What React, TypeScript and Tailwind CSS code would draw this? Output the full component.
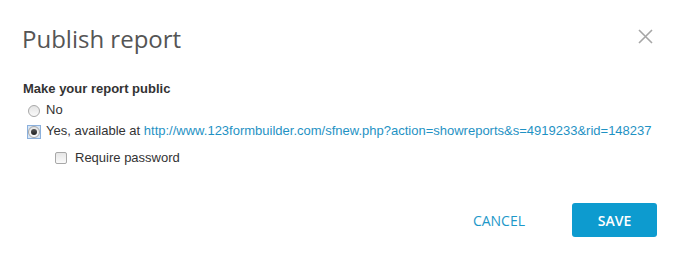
import React from 'react';

const Radio = ({ checked }: { checked?: boolean }) => (
  <span className={`flex h-[14px] w-[14px] items-center justify-center ${checked ? 'border border-[#8bb0dc] bg-[#d7e6f6]' : ''}`}>
    <span className="flex h-[12px] w-[12px] items-center justify-center rounded-full border border-[#a8a8a8] bg-gradient-to-b from-[#e4e4e4] to-[#fafafa]">
      {checked && <span className="h-[6px] w-[6px] rounded-full bg-gradient-to-b from-[#555] to-[#222]" />}
    </span>
  </span>
);

const Checkbox = () => (
  <span className="block h-[12px] w-[12px] rounded-[2px] border border-[#a8a8a8] bg-gradient-to-b from-[#e6e6e6] to-[#fafafa]" />
);

const App = () => {
  return (
    <div className="flex h-[260px] w-[675px] flex-col bg-white">
      <div className="flex items-start justify-between pl-[22px] pr-[22px] pt-[23px]">
        <h1 className="h-[32px] text-[24px] leading-[32px] font-normal text-[#555] font-['Open_Sans',sans-serif]">
          Publish report
        </h1>
        <button className="mt-[6px] mr-[0px] text-[#a6a6a6]" aria-label="Close">
          <svg width="15" height="15" viewBox="0 0 15 15" fill="none" stroke="currentColor" strokeWidth="1.6">
            <path d="M1 1L14 14M14 1L1 14" />
          </svg>
        </button>
      </div>

      <div className="mt-[23px] flex flex-col pl-[23px] text-[13px] text-[#333] font-['Liberation_Sans',Arial,sans-serif]">
        <div className="h-[21px] leading-[21px] font-bold">Make your report public</div>
        <label className="flex h-[21px] items-start leading-[21px]">
          <span className="ml-[4px] mt-[5px]">
            <Radio />
          </span>
          <span className="ml-[5px]">No</span>
        </label>
        <label className="flex h-[21px] items-start leading-[21px]">
          <span className="ml-[4px] mt-[5px]">
            <Radio checked />
          </span>
          <span className="ml-[5px]">
            Yes, available at{' '}
            <a className="text-[#1f92c4]" href="#">
              http://www.123formbuilder.com/sfnew.php?action=showreports&amp;s=4919233&amp;rid=148237
            </a>
          </span>
        </label>
        <label className="mt-[6px] flex h-[21px] items-start leading-[21px]">
          <span className="ml-[32px] mt-[5px]">
            <Checkbox />
          </span>
          <span className="ml-[8px]">Require password</span>
        </label>
      </div>

      <div className="mt-[35px] flex items-center justify-end pr-[18px] font-['Open_Sans',sans-serif] text-[14px]">
        <button className="mr-[31px] h-[34px] px-[16px] text-[#1d98c9]">CANCEL</button>
        <button className="h-[34px] w-[85px] rounded-[3px] bg-[#0d9bcf] font-semibold text-white">SAVE</button>
      </div>
    </div>
  );
};

export default App;
